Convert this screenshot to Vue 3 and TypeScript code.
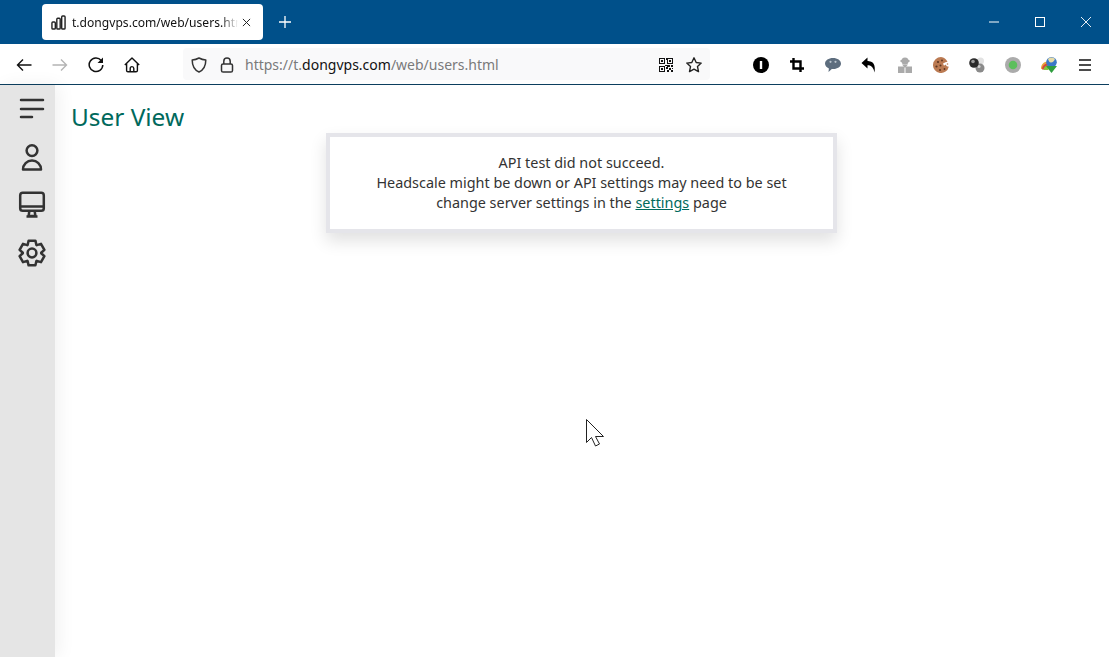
<script setup lang="ts">
// six rounded teeth around a centre, drawn as one closed outline
function gearPath(cx: number, cy: number, outer: number, inner: number): string {
  const pts: string[] = []
  for (let i = 0; i < 6; i++) {
    const a = (i * Math.PI) / 3 - Math.PI / 2
    const angles: [number, number][] = [
      [a - 0.27, outer],
      [a + 0.27, outer],
      [a + 0.5, inner],
      [a + 0.55, inner]
    ]
    for (const [t, r] of angles) {
      pts.push(`${(cx + Math.cos(t) * r).toFixed(2)} ${(cy + Math.sin(t) * r).toFixed(2)}`)
    }
  }
  return 'M' + pts.join('L') + 'Z'
}

const gear = gearPath(16, 16, 12.8, 9.2)
</script>

<template>
  <div class="window">
    <header class="titlebar">
      <div class="tab">
        <svg class="tab-icon" viewBox="0 0 16 16" fill="none" stroke="#222" stroke-width="1.5">
          <rect x="1" y="7.5" width="3.6" height="7.5" rx="1" />
          <rect x="6.2" y="3.5" width="3.6" height="11.5" rx="1" />
          <rect x="11.4" y="1" width="3.6" height="14" rx="1" />
        </svg>
        <span class="tab-title">t.dongvps.com/web/users.html</span>
        <svg class="tab-close" viewBox="0 0 10 10" stroke="#222" stroke-width="1.1">
          <path d="M1 1l8 8M9 1l-8 8" />
        </svg>
      </div>
      <button class="new-tab" type="button">
        <svg viewBox="0 0 12 12" stroke="#fff" stroke-width="1.3"><path d="M6 0v12M0 6h12" /></svg>
      </button>
      <div class="window-controls">
        <button type="button">
          <svg viewBox="0 0 10 10" stroke="#fff" stroke-width="1"><path d="M0 5h10" /></svg>
        </button>
        <button type="button">
          <svg viewBox="0 0 10 10" fill="none" stroke="#fff" stroke-width="1"><rect x=".5" y=".5" width="9" height="9" /></svg>
        </button>
        <button type="button">
          <svg viewBox="0 0 10 10" stroke="#fff" stroke-width=".9"><path d="M0 0l10 10M10 0L0 10" /></svg>
        </button>
      </div>
    </header>

    <nav class="toolbar">
      <div class="tool-group">
        <button class="tool" type="button">
          <svg viewBox="0 0 16 16" fill="none" stroke="#111" stroke-width="1.4"><path d="M15.5 8H1.5M7 2.5L1.5 8 7 13.5" /></svg>
        </button>
        <button class="tool" type="button">
          <svg viewBox="0 0 16 16" fill="none" stroke="#b4b4b4" stroke-width="1.4"><path d="M.5 8h14M9 2.5L14.500 8 9 13.5" /></svg>
        </button>
        <button class="tool" type="button">
          <svg viewBox="0 0 16 16" fill="none" stroke="#111" stroke-width="1.5">
            <path d="M13.2 3.4A6.8 6.8 0 1 0 14.8 8" />
            <path d="M15 .5v5.5H9.500z" fill="#111" stroke="none" />
          </svg>
        </button>
        <button class="tool" type="button">
          <svg viewBox="0 0 16 16" fill="none" stroke="#111" stroke-width="1.4" stroke-linejoin="round">
            <path d="M.8 8L8 1l7.2 7M2.6 6.400v7a1.400 1.400 0 0 0 1.400 1.400h8a1.400 1.400 0 0 0 1.400-1.400v-7" />
            <path d="M6.2 14.8v-3.400a1.800 1.800 0 0 1 3.600 0v3.400" />
          </svg>
        </button>
      </div>

      <div class="urlbar">
        <svg class="url-icon shield" viewBox="0 0 16 16" fill="none" stroke="#333" stroke-width="1.5" stroke-linejoin="round">
          <path d="M8 1c2 1.100 4.200 1.800 6.800 2 0 5.600-1.800 9.800-6.800 12C3 12.800 1.200 8.600 1.200 3 3.800 2.800 6 2.100 8 1z" />
        </svg>
        <svg class="url-icon lock" viewBox="0 0 16 16" fill="none" stroke="#333" stroke-width="1.5">
          <rect x="2.5" y="7" width="11" height="8" rx="1.6" />
          <path d="M4.8 7V4.200a3.200 3.200 0 0 1 6.400 0V7" />
        </svg>
        <span class="url"><span class="dim">https://t.</span>dongvps.com<span class="dim">/web/users.html</span></span>
        <svg class="url-icon qr" viewBox="0 0 14 14" fill="#111">
          <path fill-rule="evenodd" d="M0 0h6v6H0zM1 1v4h4V1zM8 0h6v6H8zM9 1v4h4V1zM0 8h6v6H0zM1 9v4h4V9z" />
          <path d="M2 2h2v2H2zM10 2h2v2h-2zM2 10h2v2H2zM7 0h1v2H7zM6 7h2v1H6zM8 7h3v2H8zM12 7h2v2h-2zM7 9h2v2H7zM10 10h2v2h-2zM8 12h2v2H8zM12 12h2v2h-2zM13 10h1v1h-1z" />
        </svg>
        <svg class="url-icon star" viewBox="0 0 16 16" fill="none" stroke="#222" stroke-width="1.4" stroke-linejoin="round">
          <path d="M8 .8l2.200 4.700 5 .6-3.700 3.500 1 5L8 12.100l-4.500 2.500 1-5L.8 6.100l5-.6z" />
        </svg>
      </div>

      <div class="tool-group extensions">
        <button class="tool" type="button">
          <svg viewBox="0 0 16 16"><circle cx="8" cy="8" r="8" fill="#000" /><rect x="6.8" y="4" width="2.4" height="8" fill="#fff" /></svg>
        </button>
        <button class="tool" type="button">
          <svg viewBox="0 0 16 16" fill="none" stroke="#000" stroke-width="2.4"><path d="M4.500 1v10.500H15M1 4.500h10.500V15" /></svg>
        </button>
        <button class="tool" type="button">
          <svg viewBox="0 0 16 16">
            <path d="M8 1c4.400 0 8 2.400 8 5.600s-3.600 5.500-7.500 5.500c-.6 0-1.200 0-1.700-.1L3.500 15l.4-3.400C1.600 10.600 0 8.900 0 6.600 0 3.400 3.600 1 8 1z" fill="#5d6d7e" />
            <circle cx="5.5" cy="4.8" r="1.1" fill="#b9c3cc" /><circle cx="10.5" cy="4.8" r="1.1" fill="#b9c3cc" />
          </svg>
        </button>
        <button class="tool" type="button">
          <svg viewBox="0 0 16 16" fill="#000">
            <path d="M6.500.5L.5 6l6 5.500V8.200c.6 0 1.100 0 1.500.1V4.200c-.5-.1-1-.1-1.500-.1z" />
            <path d="M8 4.200c4 .4 6.800 3.200 5.500 11.300-1-4.400-2.600-6.600-5.500-7.200z" />
          </svg>
        </button>
        <button class="tool" type="button">
          <svg viewBox="0 0 16 16" fill="#aaa">
            <circle cx="8" cy="4" r="3.6" /><rect x="3.5" y="3" width="9" height="2" />
            <path d="M1 9.500h6.500V16H1zM8.500 9.500H15V16H8.500z" /><path d="M5 7.500h6L8 11z" />
          </svg>
        </button>
        <button class="tool" type="button">
          <svg viewBox="0 0 16 16">
            <path d="M8 0a8 8 0 1 0 7.800 9.700l-2-.5-1.300-1.700L11 8.700 10 6.500l2.500-1.200 2-.5C13.300 2 11 .3 8 0z" fill="#bb7a52" />
            <circle cx="5" cy="5" r="1.1" fill="#5a3420" /><circle cx="9" cy="3.5" r=".9" fill="#5a3420" />
            <circle cx="3.5" cy="9.5" r="1.1" fill="#5a3420" /><circle cx="7.5" cy="8.5" r="1" fill="#5a3420" />
            <circle cx="7" cy="13" r="1" fill="#5a3420" /><circle cx="11.5" cy="12" r=".9" fill="#5a3420" />
            <circle cx="14.5" cy="7" r=".8" fill="#bb7a52" />
          </svg>
        </button>
        <button class="tool" type="button">
          <svg viewBox="0 0 16 16">
            <circle cx="11.5" cy="4" r="3.5" fill="#e2e2e2" />
            <circle cx="11" cy="11" r="4.5" fill="#8a8a8a" /><circle cx="10" cy="9.5" r="1.6" fill="#d0d0d0" />
            <circle cx="5" cy="6" r="4.8" fill="#2b2b2b" /><circle cx="4" cy="4.5" r="1.8" fill="#9c9c9c" />
          </svg>
        </button>
        <button class="tool" type="button">
          <svg viewBox="0 0 16 16"><circle cx="8" cy="8" r="8" fill="#ababab" /><circle cx="8" cy="8" r="4.3" fill="#5cbf5c" /></svg>
        </button>
        <button class="tool" type="button">
          <svg viewBox="0 0 16 16">
            <path d="M0 12c0-5 3-7.500 7-7.500v7H2z" fill="#e8a33a" />
            <path d="M1 12.500C1 9 3.500 6.500 7 6.500v6z" fill="#d6453d" />
            <path d="M2.500 13c0-2.500 2-4.500 5-4.500V13z" fill="#86c440" />
            <circle cx="10.5" cy="5.3" r="5.3" fill="#3a78c8" />
            <path d="M7 2c2-2 5-2 7 0-1 2-2 3.500-4 3.500S8 4 7 2z" fill="#e6dca8" />
            <path d="M5 9h11l-5.500 7z" fill="#2f9e3f" />
          </svg>
        </button>
        <button class="tool" type="button">
          <svg viewBox="0 0 16 16" stroke="#111" stroke-width="1.3"><path d="M2 3h12M2 8h12M2 13h12" /></svg>
        </button>
      </div>
    </nav>

    <main class="page">
      <aside class="sidebar">
        <a class="side-link">
          <svg viewBox="0 0 32 32" fill="none" stroke="#333" stroke-width="2.5" stroke-linecap="round">
            <path d="M5 7h22M5 16h22M5 24h11" />
          </svg>
        </a>
        <a class="side-link">
          <svg viewBox="0 0 32 32" fill="none" stroke="#333" stroke-width="2.5" stroke-linejoin="round">
            <circle cx="16" cy="9.6" r="5.4" />
            <path d="M7 28.500c0-5.200 4-9 9-9s9 3.800 9 9z" />
          </svg>
        </a>
        <a class="side-link">
          <svg viewBox="0 0 32 32" fill="none" stroke="#333" stroke-width="2.5" stroke-linejoin="round">
            <rect x="4.2" y="3.8" width="23.6" height="18" rx="2.6" />
            <path d="M4.200 17.600h23.600M13.400 21.800l-.8 5.200h6.800l-.8-5.200M10.500 27.500h11" />
          </svg>
        </a>
        <a class="side-link">
          <svg viewBox="0 0 32 32" fill="none" stroke="#333" stroke-width="2.5" stroke-linejoin="round">
            <path :d="gear" />
            <circle cx="16" cy="16" r="4.4" />
          </svg>
        </a>
      </aside>

      <section class="content">
        <h1>User View</h1>
        <div class="alert">
          API test did not succeed.<br />
          Headscale might be down or API settings may need to be set<br />
          change server settings in the <a href="#">settings</a> page
        </div>
      </section>

      <svg class="cursor" viewBox="0 0 20 28" fill="#fff" stroke="#222" stroke-width="1">
        <path d="M.5.500V23.500L5.500 18.500 9.500 27 13.500 25 9.500 17.500H17.500z" />
      </svg>
    </main>
  </div>
</template>

<style scoped>
.window {
  display: flex;
  flex-direction: column;
  height: 657px;
  overflow: hidden;
  font-family: "Noto Sans", "Open Sans", sans-serif;
  color: #333;
  background: #fff;
}
button {
  display: flex;
  align-items: center;
  justify-content: center;
  padding: 0;
  border: 0;
  background: none;
}

.titlebar {
  display: flex;
  height: 44px;
  flex: none;
  padding-left: 42px;
  background: #00508a;
}
.tab {
  display: flex;
  align-items: center;
  width: 221px;
  height: 36px;
  margin-top: 4px;
  padding: 0 12px 0 9px;
  box-sizing: border-box;
  background: #fff;
  border-radius: 4px;
}
.tab-icon {
  width: 15px;
  height: 15px;
  flex: none;
}
.tab-title {
  flex: 1;
  margin: 0 4px 0 6px;
  overflow: hidden;
  white-space: nowrap;
  font-size: 12.1px;
  color: #111;
  -webkit-mask-image: linear-gradient(to right, #000 90%, transparent);
  mask-image: linear-gradient(to right, #000 90%, transparent);
}
.tab-close {
  width: 9px;
  height: 9px;
  flex: none;
}
.new-tab {
  width: 44px;
  height: 44px;
}
.new-tab svg {
  width: 12px;
  height: 12px;
}
.window-controls {
  display: flex;
  margin-left: auto;
}
.window-controls button {
  width: 46px;
  height: 44px;
}
.window-controls svg {
  width: 10px;
  height: 10px;
}

.toolbar {
  display: flex;
  align-items: center;
  height: 40px;
  flex: none;
  padding: 0 6px;
  background: #fff;
  border-bottom: 1px solid #0c3f5f;
}
.tool-group {
  display: flex;
}
.extensions {
  margin-left: auto;
}
.tool {
  width: 36px;
  height: 32px;
  padding-top: 1px;
}
.tool svg {
  width: 16px;
  height: 16px;
}
.urlbar {
  display: flex;
  align-items: center;
  width: 527px;
  height: 32px;
  margin-left: 33px;
  padding-top: 1px;
  box-sizing: border-box;
  background: #f9f9fa;
  border-radius: 4px;
}
.url-icon {
  flex: none;
  width: 16px;
  height: 16px;
}
.shield {
  margin-left: 8px;
}
.lock {
  margin-left: 12px;
}
.url {
  flex: 1;
  margin-left: 10px;
  font-size: 14px;
  color: #111;
  white-space: nowrap;
}
.dim {
  color: #7a7a7a;
}
.qr {
  width: 14px;
  height: 14px;
}
.star {
  margin: 0 8px 0 13px;
}

.page {
  position: relative;
  display: flex;
  flex: 1;
  min-height: 0;
}
.sidebar {
  position: relative;
  width: 55px;
  flex: none;
  background: #e5e5e5;
  box-shadow: 4px 0 18px rgba(0, 0, 0, 0.06);
}
.side-link {
  display: flex;
  align-items: center;
  justify-content: center;
  height: 48px;
  padding-left: 9px;
  box-sizing: border-box;
}
.side-link svg {
  width: 32px;
  height: 32px;
}
.content {
  position: relative;
  flex: 1;
  padding-left: 16px;
}
h1 {
  margin: 0;
  padding-top: 15px;
  font-size: 24.4px;
  line-height: 34px;
  font-weight: 400;
  color: #00695c;
}
.alert {
  position: absolute;
  top: 48px;
  left: 271px;
  width: 511px;
  padding: 16px;
  box-sizing: border-box;
  border: 4px solid #e5e5ea;
  background: #fff;
  box-shadow: 0 8px 16px rgba(0, 0, 0, 0.12);
  font-size: 14.4px;
  line-height: 20px;
  text-align: center;
  color: #333;
}
.alert a {
  color: #00695c;
}
.cursor {
  position: absolute;
  left: 586px;
  top: 334px;
  width: 20px;
  height: 28px;
}
</style>
